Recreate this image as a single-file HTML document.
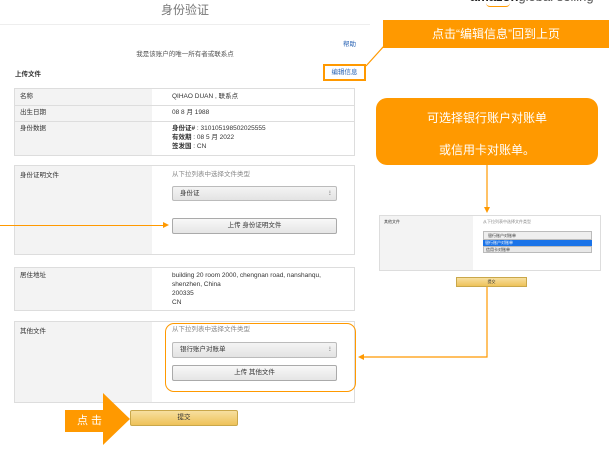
<!DOCTYPE html>
<html><head><meta charset="utf-8"><style>
*{margin:0;padding:0;box-sizing:border-box}
body{width:609px;height:450px;position:relative;overflow:hidden;background:#fff;font-family:"Liberation Sans","Noto Sans CJK SC",sans-serif;color:#333}
.a{position:absolute}
.s{font-size:6.5px;line-height:9px}
.blue{color:#2a64b5}
.sec{position:absolute;left:14px;width:341px;border:1px solid #ddd;background:linear-gradient(to right,#f3f3f3 0,#f3f3f3 137px,#fff 137px)}
.row{position:absolute;left:0;width:100%;border-top:1px solid #ddd}
.sel{position:absolute;left:172px;width:165px;height:15px;border:1px solid #bbb;border-radius:2px;background:linear-gradient(#f4f4f4,#e3e3e3);font-size:6.5px;line-height:13px;padding-left:7px}
.btn{position:absolute;left:172px;width:165px;height:16px;border:1px solid #aaa;border-radius:2px;background:linear-gradient(#f8f8f8,#e5e5e5);font-size:6.5px;line-height:14px;text-align:center}
.or{background:#ff9900;color:#fff}
</style></head><body>
<div class="a" style="left:0;top:0;width:370px;text-align:center;font-size:12px;color:#777;top:1px">身份验证</div>
<div class="a" style="left:0;top:24px;width:370px;height:1px;background:#eee"></div>
<div class="a s blue" style="left:343px;top:40px">帮助</div>
<div class="a s" style="left:0;top:50px;width:370px;text-align:center;color:#555">我是该账户的唯一所有者或联系点</div>
<div class="a s" style="left:15px;top:70px;font-weight:bold">上传文件</div>
<div class="a s blue" style="left:323px;top:64px;width:43px;height:17px;border:2px solid #ff9900;text-align:center;line-height:13px">编辑信息</div>

<div class="sec" style="top:88px;height:68px">
 <div class="a s" style="left:5px;top:3px">名称</div><div class="a s" style="left:157px;top:3px">QIHAO DUAN , 联系点</div>
 <div class="row" style="top:16px"></div>
 <div class="a s" style="left:5px;top:19px">出生日期</div><div class="a s" style="left:157px;top:19px">08 8 月 1988</div>
 <div class="row" style="top:32px"></div>
 <div class="a s" style="left:5px;top:35px">身份数据</div>
 <div class="a s" style="left:157px;top:35px"><b>身份证#</b> : 310105198502025555<br><b>有效期</b> : 08 5 月 2022<br><b>签发国</b> : CN</div>
</div>

<div class="sec" style="top:165px;height:90px">
 <div class="a s" style="left:5px;top:5px">身份证明文件</div>
 <div class="a s" style="left:157px;top:4px;color:#888">从下拉列表中选择文件类型</div>
</div>
<div class="sel" style="top:186px">身份证<span style="float:right;margin-right:5px">⁝</span></div>
<div class="btn" style="top:218px">上传 身份证明文件</div>
<div class="a" style="left:0;top:225px;width:164px;height:1px;background:#ff9900"></div>
<div class="a" style="left:163px;top:222px;border-left:6px solid #ff9900;border-top:3px solid transparent;border-bottom:3px solid transparent"></div>

<div class="sec" style="top:267px;height:44px">
 <div class="a s" style="left:5px;top:3px">居住地址</div>
 <div class="a s" style="left:157px;top:3px">building 20 room 2000, chengnan road, nanshanqu,<br>shenzhen, China<br>200335<br>CN</div>
</div>

<div class="sec" style="top:321px;height:82px">
 <div class="a s" style="left:5px;top:5px">其他文件</div>
</div>
<div class="a" style="left:165px;top:323px;width:191px;height:69px;border:1.5px solid #ff9900;border-radius:9px"></div>
<div class="a s" style="left:172px;top:325px;color:#888">从下拉列表中选择文件类型</div>
<div class="sel" style="top:342px;height:16px">银行账户对账单<span style="float:right;margin-right:5px">⁝</span></div>
<div class="btn" style="top:365px">上传 其他文件</div>

<div class="a" style="left:130px;top:410px;width:108px;height:16px;border:1px solid #c9a74a;border-radius:2px;background:linear-gradient(#f7dfa0,#eec25a);font-size:6.5px;line-height:14px;text-align:center">提交</div>
<div class="a or" style="left:65px;top:410px;width:40px;height:22px;font-size:11px;line-height:22px;padding-left:12px;letter-spacing:3px">点击</div>
<div class="a" style="left:103px;top:393px;border-left:27px solid #ff9900;border-top:26px solid transparent;border-bottom:26px solid transparent"></div>

<div class="a" style="left:470px;top:-11px;font-size:13px;font-weight:bold;color:#222">amazon<span style="font-weight:normal;color:#555">global selling</span></div>
<div class="a" style="left:486px;top:3px;width:24px;height:4px;border-bottom:1.5px solid #ff9900;border-radius:0 0 12px 12px"></div>
<div class="a or" style="left:383px;top:20px;width:226px;height:28px;font-size:12px;line-height:28px;text-align:center">点击“编辑信息”回到上页</div>
<svg class="a" style="left:0;top:0" width="609" height="450">
<line x1="384" y1="46" x2="366" y2="66" stroke="#ff9900" stroke-width="1.2"/>
<line x1="487" y1="165" x2="487" y2="208" stroke="#ff9900" stroke-width="1.2"/>
<polygon points="484,207 490,207 487,213" fill="#ff9900"/>
<polyline points="487,287 487,357 362,357" fill="none" stroke="#ff9900" stroke-width="1.2"/>
<polygon points="358,357 364,354 364,360" fill="#ff9900"/>
</svg>
<div class="a or" style="left:376px;top:98px;width:222px;height:67px;border-radius:11px;font-size:12px;text-align:center;line-height:16px;padding-top:12px">可选择银行账户对账单<br><br>或信用卡对账单。</div>

<div class="a" style="left:379px;top:215px;width:222px;height:56px;border:1px solid #ddd;background:linear-gradient(to right,#f3f3f3 0,#f3f3f3 93px,#fff 93px)">
 <div class="a" style="left:4px;top:3px;font-size:4px">其他文件</div>
 <div class="a" style="left:103px;top:3px;font-size:4px;color:#888">从下拉列表中选择文件类型</div>
 <div class="a" style="left:103px;top:15px;width:109px;height:9px;border:1px solid #bbb;background:#eee;font-size:4px;line-height:7px;padding-left:4px">银行账户对账单</div>
 <div class="a" style="left:103px;top:24px;width:109px;height:6px;background:#1a73e8;color:#fff;font-size:4px;line-height:6px;padding-left:2px">银行账户对账单</div>
 <div class="a" style="left:103px;top:30px;width:109px;height:7px;background:#e8e8e8;border:1px solid #bbb;font-size:4px;line-height:5px;padding-left:2px">信用卡对账单</div>
</div>
<div class="a" style="left:456px;top:277px;width:71px;height:10px;border:1px solid #c9a74a;background:linear-gradient(#f7dfa0,#eec25a);font-size:4px;line-height:8px;text-align:center">提交</div>
</body></html>
